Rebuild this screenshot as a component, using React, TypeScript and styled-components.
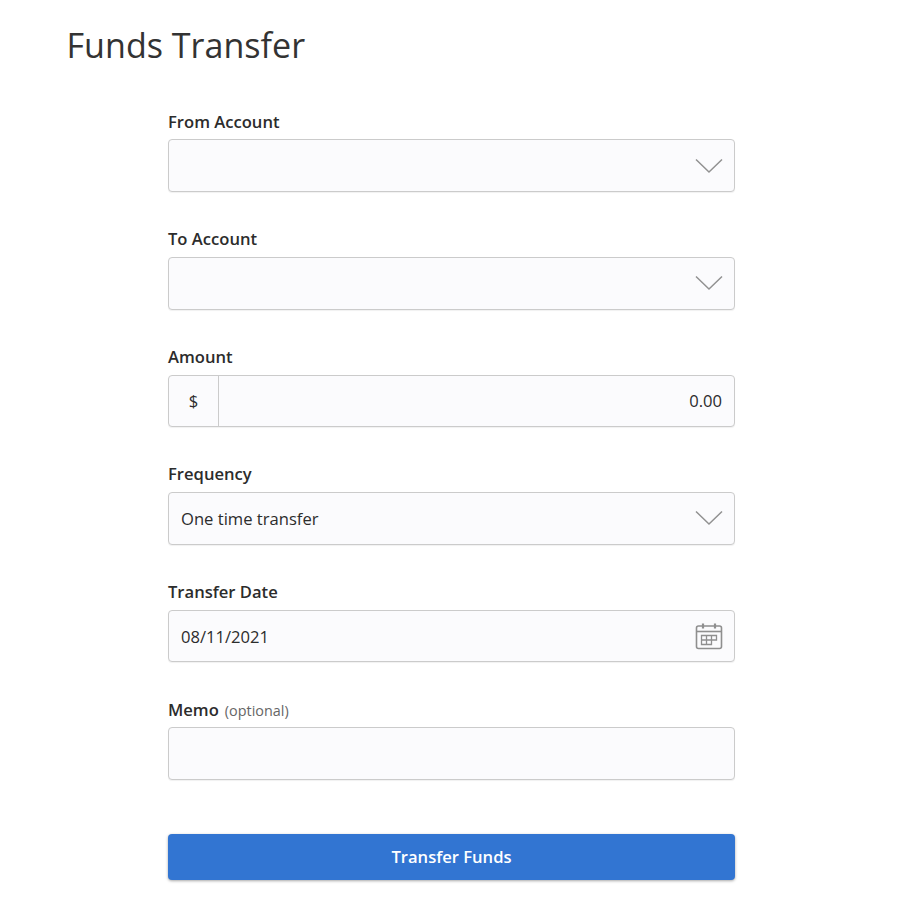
import styled, { createGlobalStyle } from 'styled-components';

const GlobalStyle = createGlobalStyle`
  html, body {
    margin: 0;
    padding: 0;
    background: #fff;
  }
  body {
    font-family: "Open Sans", "Noto Sans", sans-serif;
    color: #2c2c2c;
  }
`;

const Page = styled.div`
  width: 900px;
  height: 921px;
  overflow: hidden;
`;

const Title = styled.h1`
  margin: 0;
  padding: 21px 0 0 66.5px;
  height: 48px;
  font-size: 34.1px;
  line-height: 48px;
  font-weight: 400;
  color: #333;
`;

const Form = styled.form`
  width: 567px;
  margin: 41.6px 0 0 168px;
  display: flex;
  flex-direction: column;
`;

const Field = styled.div`
  height: 117.6px;
  display: flex;
  flex-direction: column;
`;

const Label = styled.label`
  height: 22px;
  margin-bottom: 6.8px;
  font-size: 16.6px;
  line-height: 22px;
  font-weight: 600;
  color: #2c2c2c;
`;

const Optional = styled.span`
  margin-left: 6px;
  font-size: 14.4px;
  font-weight: 400;
  color: #666;
`;

const Control = styled.div`
  box-sizing: border-box;
  height: 52.6px;
  display: flex;
  align-items: center;
  border: 1px solid #cbcbcb;
  border-radius: 4px;
  background: #fbfbfd;
  font-size: 16.6px;
  box-shadow: 0 1px 1px rgba(0, 0, 0, 0.06);
`;

const Value = styled.span`
  padding-left: 12px;
`;

const Addon = styled.span`
  box-sizing: border-box;
  width: 50px;
  height: 100%;
  display: flex;
  align-items: center;
  justify-content: center;
  border-right: 1px solid #cbcbcb;
  flex-shrink: 0;
`;

const AmountValue = styled.span`
  flex: 1;
  text-align: right;
  padding-right: 12px;
`;

const IconSlot = styled.span`
  display: flex;
  margin-left: auto;
  margin-right: 11px;
`;

const SubmitButton = styled.button`
  height: 46px;
  margin-top: 17.8px;
  border: none;
  border-radius: 4px;
  background: #3275d2;
  color: #fff;
  font-family: inherit;
  font-size: 16.6px;
  font-weight: 600;
  box-shadow: 0 1px 3px rgba(0, 0, 0, 0.35);
`;

const Chevron = () => (
  <svg width="28" height="16" viewBox="0 0 28 16" fill="none" stroke="#919191" strokeWidth="1.5">
    <path d="M1 1.5 L14 14 L27 1.5" />
  </svg>
);

const CalendarIcon = () => (
  <svg width="28" height="28" viewBox="0 0 28 28" fill="none" stroke="#8f8f8f" strokeWidth="1.6">
    <rect x="1.5" y="4" width="25" height="22.5" rx="2" />
    <path d="M1.5 9.5 H26.5" />
    <path d="M8 1.5 V6.5 M20 1.5 V6.5" strokeWidth="2.2" />
    <path d="M6.5 13.5 H21.5 V18 H16.5 V22.5 H6.5 Z M6.5 18 H16.5 M11.5 13.5 V22.5 M16.5 13.5 V18" strokeWidth="1.3" />
  </svg>
);

const App = () => (
  <Page>
    <GlobalStyle />
    <Title>Funds Transfer</Title>
    <Form>
      <Field>
        <Label>From Account</Label>
        <Control>
          <IconSlot>
            <Chevron />
          </IconSlot>
        </Control>
      </Field>
      <Field>
        <Label>To Account</Label>
        <Control>
          <IconSlot>
            <Chevron />
          </IconSlot>
        </Control>
      </Field>
      <Field>
        <Label>Amount</Label>
        <Control>
          <Addon>$</Addon>
          <AmountValue>0.00</AmountValue>
        </Control>
      </Field>
      <Field>
        <Label>Frequency</Label>
        <Control>
          <Value>One time transfer</Value>
          <IconSlot>
            <Chevron />
          </IconSlot>
        </Control>
      </Field>
      <Field>
        <Label>Transfer Date</Label>
        <Control>
          <Value>08/11/2021</Value>
          <IconSlot>
            <CalendarIcon />
          </IconSlot>
        </Control>
      </Field>
      <Field>
        <Label>
          Memo<Optional>(optional)</Optional>
        </Label>
        <Control />
      </Field>
      <SubmitButton type="button">Transfer Funds</SubmitButton>
    </Form>
  </Page>
);

export default App;
